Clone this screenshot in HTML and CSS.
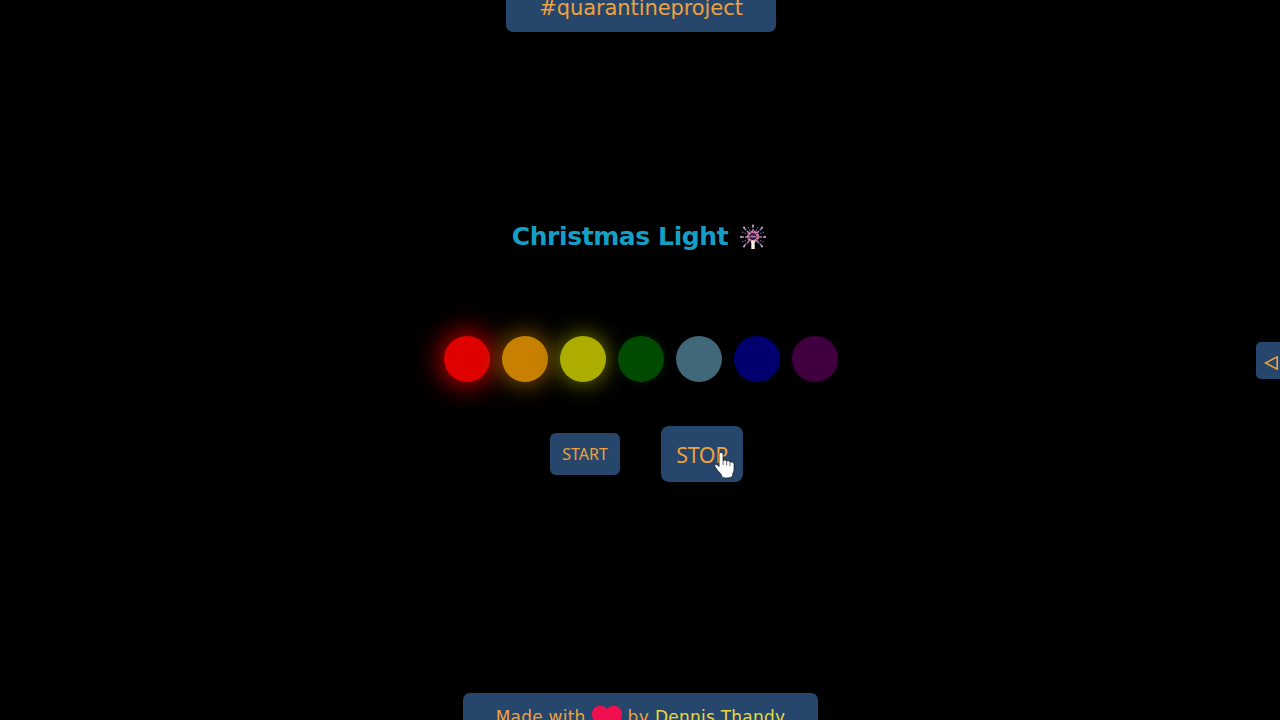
FILE: index.html
```html
<!DOCTYPE html>
<html lang="en">
<head>
<meta charset="utf-8">
<title>Christmas Light</title>
<link rel="stylesheet" href="styles.css">
</head>
<body>
<header class="tag"><span class="tag-text">#quarantineproject</span></header>
<main class="main">
  <h1 class="title"><span class="title-text">Christmas Light</span>
    <svg class="sparkler" viewBox="0 0 26 26" fill="none">
      <path class="rays" d="M13 1v6M1 13h6M19 13h6M4 4l5 5M22 4l-5 5M4 22l5-5M22 22l-5-5"/>
      <path class="rays faint" d="M8 3l2 4M18 3l-2 4M2 8l5 2M24 8l-5 2M2 18l5-2M24 18l-5-2"/>
      <path class="tips" d="M12 1.500h2M3 3.500h2M21 3.500h2M0 13h2M24 13h2M3 22.500h2M21 22.500h2"/>
      <circle class="spark" cx="13" cy="12.500" r="4.800"/>
      <path class="core" d="M10.500 12.500h5"/>
      <path class="stick" d="M13 16.500v8.500"/>
    </svg>
  </h1>
  <div class="lights">
    <span class="light red"></span><span class="light orange"></span><span class="light yellow"></span><span class="light green"></span><span class="light cyan"></span><span class="light blue"></span><span class="light purple"></span>
  </div>
  <div class="controls">
    <button class="button start">START</button>
    <button class="button stop">STOP</button>
  </div>
</main>
<footer class="credit"><span class="made">Made with</span>
  <svg class="heart" viewBox="0 0 30 28"><path d="M15 28C8 22 0 16 0 8.500C0 2.500 3.500 0 8 0C11.500 0 14 1 15 3C16 1 18.500 0 22 0C26.500 0 30 2.500 30 8.500C30 16 22 22 15 28Z"/></svg>
  <span class="by">by</span><a class="author">Dennis Thandy</a>
</footer>
<aside class="drawer"><svg class="arrow" viewBox="0 0 16 14"><path d="M13.200 .9v12.200L1.500 7Z"/></svg></aside>
<svg class="pointer" viewBox="0 0 22 28"><path d="M7 1.500C8.400 1.500 9 2.500 9 3.700V10C9.500 8.600 12.300 8.700 12.600 10.500C13.600 9.300 15.600 9.700 16 11.400C17.300 10.500 20 11.200 20 13.200V18.500C20 21 18.500 22 18.500 24.500V25.500C14 27.500 10 27.500 7.500 25.500V24C6.500 22 4 20.500 2.800 18.200L.9 15.500C.2 14 2 12.900 3.400 13.900L5.100 15.600V3.500C5.100 2.400 5.700 1.500 7 1.500Z"/><path class="creases" d="M9.100 10v4M12.600 11v3.500M16 12v3"/></svg>
</body>
</html>
```
FILE: styles.css
```css
* { box-sizing: border-box; }
body {
  margin: 0;
  height: 720px;
  overflow: hidden;
  position: relative;
  display: flex;
  flex-direction: column;
  align-items: center;
  background: #000;
  color: #eea23d;
  font-family: "DejaVu Sans", sans-serif;
}
.tag {
  flex: none;
  width: 270px;
  height: 52px;
  margin: -20px 0 0 1px;
  display: flex;
  align-items: center;
  justify-content: center;
  border-radius: 7px;
  background: #26466c;
  font-size: 21px;
  line-height: 24px;
  letter-spacing: -0.08px;
  padding: 4px 0 0 1px;
}
.main {
  flex: none;
  width: 410px;
  height: 661px;
  padding-top: 188px;
  display: flex;
  flex-direction: column;
  align-items: center;
}
.title {
  margin: 0 2px 0 0;
  height: 34px;
  display: flex;
  align-items: center;
  gap: 12px;
  color: #159fc4;
  font-size: 25px;
  line-height: 34px;
  letter-spacing: -0.4px;
}
.sparkler { width: 26px; height: 26px; }
.rays { stroke: #9187c5; stroke-width: 1.5; stroke-dasharray: 3 1; }
.faint { stroke: #796497; stroke-width: 1.2; stroke-dasharray: 1.5 1.2; }
.tips { stroke: #e5a6c4; stroke-width: 1.5; }
.spark { stroke: #dc79a3; stroke-width: 2.6; stroke-dasharray: 2.8 .5; fill: #33203f; }
.core { stroke: #ad83cb; stroke-width: 1.5; }
.stick { stroke: #fff3e5; stroke-width: 3.4; }
.lights {
  margin: 82px 0 0 2px;
  display: flex;
  gap: 12px;
}
.light {
  width: 46px;
  height: 46px;
  border-radius: 50%;
}
.red { background: #df0000; box-shadow: 0 0 28px 3px #d00000; }
.orange { background: #c88000; box-shadow: 0 0 25px 2px #8c5900; }
.yellow { background: #adad00; box-shadow: 0 0 21px 2px #6c6c00; }
.green { background: #004b00; box-shadow: 0 0 8px #001c00; }
.cyan { background: #416879; }
.blue { background: #00006e; box-shadow: 0 0 5px #000018; }
.purple { background: #400040; box-shadow: 0 0 6px #120012; }
.controls {
  margin: 44px 0 0 13px;
  display: flex;
  align-items: center;
  gap: 41px;
}
.button {
  padding: 0;
  border: 0;
  background: #26466c;
  color: inherit;
  font-family: "Noto Sans", sans-serif;
}
.start { width: 70px; height: 42px; border-radius: 6px; font-size: 16px; }
.stop { width: 82px; height: 56px; border-radius: 8px; font-size: 21.5px; letter-spacing: -0.4px; }
.credit {
  flex: none;
  width: 355px;
  height: 48px;
  margin-left: 1px;
  display: flex;
  align-items: center;
  justify-content: center;
  border-radius: 7px;
  background: #26466c;
  font-size: 17px;
  letter-spacing: 0.24px;
}
.heart { width: 30px; height: 28px; margin: 6px 6px 0; fill: #f01050; }
.author { margin-left: 6px; color: #e8d83c; }
.drawer {
  position: absolute;
  right: -8px;
  top: 342px;
  width: 32px;
  height: 37px;
  padding: 14px 0 0 8px;
  border-radius: 5px;
  background: #26466c;
}
.arrow { display: block; width: 16px; height: 14px; fill: none; stroke: #eea23d; stroke-width: 1.6; }
.pointer {
  position: absolute;
  left: 714px;
  top: 451px;
  width: 22px;
  height: 28px;
  fill: #fff;
  stroke: #000;
  stroke-width: .6;
}
.creases { fill: none; }
```
